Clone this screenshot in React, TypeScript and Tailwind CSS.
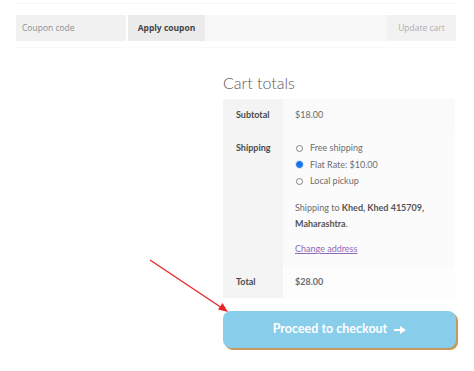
import React from "react";

function Radio({ checked }: { checked?: boolean }) {
  return (
    <span
      className={
        "inline-block w-[7px] h-[7px] rounded-full ml-[1px] mr-[7px] shrink-0 " +
        (checked
          ? "bg-[#1a73e8] border border-[#1a73e8] shadow-[0_0_0_1px_#d6e5fb]"
          : "border border-[#808080] bg-white")
      }
    />
  );
}

export default function App() {
  return (
    <div
      className="relative w-[474px] h-[371px] bg-white overflow-hidden"
      style={{ fontFamily: "Lato, 'Noto Sans', sans-serif" }}
    >
      <div className="ml-[16px] w-[440px] mt-[3px] border-t border-[#f8f8f8]" />
      <div
        className="ml-[16px] w-[440px] mt-[11px] flex h-[26px] text-[8.5px]"
        style={{ fontFamily: "'Open Sans', 'Noto Sans', sans-serif" }}
      >
        <div className="w-[110px] bg-[#f1f1f1] flex items-center pl-[6px] text-[#8f8f8f]">
          Coupon code
        </div>
        <div className="ml-[2px] w-[77px] bg-[#ebebeb] flex items-center justify-center font-bold text-[#444]">
          Apply coupon
        </div>
        <div className="flex-1 bg-[#f8f8f8]" />
        <div className="w-[69px] bg-[#f2f2f2] flex items-center justify-center text-[#b0b0b0]">
          Update cart
        </div>
      </div>
      <div className="ml-[16px] w-[440px] mt-[6px] border-t border-[#f9f9f9]" />

      <div className="ml-[223px] w-[233px] mt-[25px]">
        <div className="text-[16px] leading-[20px] font-light text-[#5a5a5a]">Cart totals</div>
        <div className="mt-[6px] w-[232px] text-[9px] leading-[16px]">
          <div className="flex h-[33px]">
            <div className="w-[60px] bg-[#f4f4f4] pl-[13px] pt-[8px] font-bold text-[#4a4a4a]">Subtotal</div>
            <div className="flex-1 bg-[#fafafa] pl-[12px] pt-[8px] text-[#6d6d6d]">$18.00</div>
          </div>
          <div className="flex h-[135px]">
            <div className="w-[60px] bg-[#f4f4f4] pl-[13px] pt-[8px] font-bold text-[#4a4a4a]">Shipping</div>
            <div className="flex-1 bg-[#fbfbfb] pl-[12px] pt-[8px] text-[#6d6d6d]">
              <div className="flex items-center h-[16.5px]">
                <Radio />
                <span>Free shipping</span>
              </div>
              <div className="flex items-center h-[16.5px]">
                <Radio checked />
                <span>Flat Rate: $10.00</span>
              </div>
              <div className="flex items-center h-[16.5px]">
                <Radio />
                <span>Local pickup</span>
              </div>
              <div className="mt-[10.5px]">
                Shipping to <span className="font-bold text-[#555]">Khed, Khed 415709,</span>
                <br />
                <span className="font-bold text-[#555]">Maharashtra</span>.
              </div>
              <div className="mt-[9px] text-[#8e6bb5] underline">Change address</div>
            </div>
          </div>
          <div className="flex h-[31px]">
            <div className="w-[60px] bg-[#f4f4f4] pl-[13px] pt-[7px] font-bold text-[#4a4a4a]">Total</div>
            <div className="flex-1 bg-[#fdfdfd] pl-[12px] pt-[7px] font-bold text-[#6d6d6d]">$28.00</div>
          </div>
        </div>
        <div className="mt-[13px] h-[37px] w-[233px] rounded-[8px] bg-[#88cdea] shadow-[2px_2px_0_#c9985e] flex items-center justify-center gap-[7px] text-white font-bold text-[12.5px]">
          <span>Proceed to checkout</span>
          <svg width="12" height="8" viewBox="0 0 12 8">
            <rect x="0" y="3" width="7" height="2" fill="white" />
            <polygon points="6,0 12,4 6,8" fill="white" />
          </svg>
        </div>
      </div>

      <svg className="absolute left-0 top-0" width="474" height="371" viewBox="0 0 474 371">
        <line x1="150" y1="260" x2="222" y2="308" stroke="#e8262a" strokeWidth="1.3" />
        <polygon points="228,312 218,309.5 222.5,303" fill="#e8262a" />
      </svg>
    </div>
  );
}
